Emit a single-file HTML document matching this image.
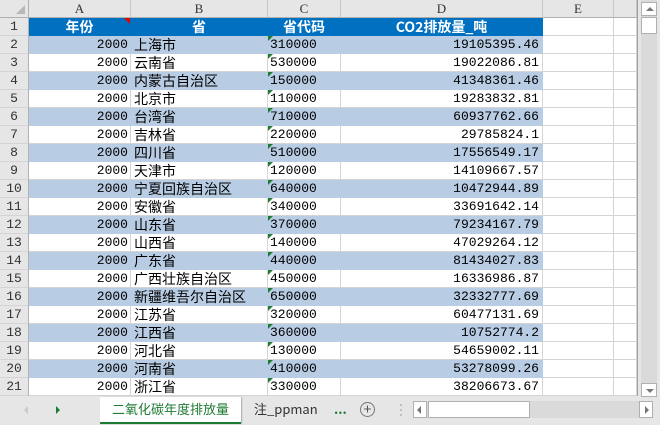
<!DOCTYPE html>
<html><head><meta charset="utf-8"><style>
*{margin:0;padding:0;box-sizing:border-box}
body{width:660px;height:425px;overflow:hidden;background:#e6e6e6;font-family:"Liberation Mono","Noto Sans CJK SC",monospace;font-size:13px;position:relative}
.grid{position:absolute;left:0;top:0;width:638px;height:396px;background:#fff;border-right:1px solid #a0a0a0}
.r{position:absolute;left:0;height:18px;width:637px;display:flex}
.r div{height:18px;line-height:18px;border-right:1px solid #d4d4d4;border-bottom:1px solid #d4d4d4;white-space:nowrap;overflow:hidden;position:relative}
.h div{background:#e6e6e6;text-align:center;border-right:1px solid #c6c6c6;border-bottom:1px solid #b0b0b0;color:#333;font-family:"Liberation Serif","Noto Serif CJK SC",serif;font-size:13px;padding:0!important}
.c0{width:29px;text-align:center;background:#e6e6e6!important;border-right:1px solid #b0b0b0!important;color:#333}
.c1{width:102px;text-align:right;padding-right:2px}
.c2{width:137px;padding-left:3px;font-family:"Noto Sans CJK SC",sans-serif;font-size:14px}
.c3{width:73px;padding-left:2px}
.c4{width:202px;text-align:right;padding-right:3px}
.c5{width:71px}
.c6{width:23px}
.b .c1,.b .c2,.b .c3,.b .c4{background:#b8cce4;border-color:#b8cce4}
.t .c1,.t .c2,.t .c3,.t .c4{background:#0070c0;color:#fff;font-weight:bold;text-align:center;font-family:"Noto Sans CJK SC",sans-serif;font-size:14px;border-color:#0070c0;padding:0}
.g::before{content:"";position:absolute;left:0;top:0;border-top:5px solid #1e7b34;border-right:5px solid transparent}
.red::after{content:"";position:absolute;right:0;top:0;border-top:6px solid #e00;border-left:6px solid transparent}
.vs{position:absolute;left:641px;top:0;width:16px;height:396px;background:#dadada}
.btn{position:absolute;background:#fff;border:1px solid #b0b0b0}
.tabs{position:absolute;left:0;top:397px;width:660px;height:28px;background:#e6e6e6;font-family:"Noto Sans CJK SC",sans-serif;font-size:13px}
</style></head><body>
<div class="grid">
<div class="r h" style="top:0"><div class="c0"><span style="position:absolute;right:3px;bottom:3px;border-bottom:9px solid #b8b8b8;border-left:9px solid transparent"></span></div><div class="c1">A</div><div class="c2">B</div><div class="c3">C</div><div class="c4">D</div><div class="c5">E</div><div class="c6"></div></div>
<div class="r t" style="top:18px"><div class="c0">1</div><div class="c1 red">年份</div><div class="c2">省</div><div class="c3">省代码</div><div class="c4">CO2排放量_吨</div><div class="c5"></div><div class="c6"></div></div>
<div class="r b" style="top:36px"><div class="c0">2</div><div class="c1">2000</div><div class="c2">上海市</div><div class="c3 g">310000</div><div class="c4">19105395.46</div><div class="c5"></div><div class="c6"></div></div>
<div class="r" style="top:54px"><div class="c0">3</div><div class="c1">2000</div><div class="c2">云南省</div><div class="c3 g">530000</div><div class="c4">19022086.81</div><div class="c5"></div><div class="c6"></div></div>
<div class="r b" style="top:72px"><div class="c0">4</div><div class="c1">2000</div><div class="c2">内蒙古自治区</div><div class="c3 g">150000</div><div class="c4">41348361.46</div><div class="c5"></div><div class="c6"></div></div>
<div class="r" style="top:90px"><div class="c0">5</div><div class="c1">2000</div><div class="c2">北京市</div><div class="c3 g">110000</div><div class="c4">19283832.81</div><div class="c5"></div><div class="c6"></div></div>
<div class="r b" style="top:108px"><div class="c0">6</div><div class="c1">2000</div><div class="c2">台湾省</div><div class="c3 g">710000</div><div class="c4">60937762.66</div><div class="c5"></div><div class="c6"></div></div>
<div class="r" style="top:126px"><div class="c0">7</div><div class="c1">2000</div><div class="c2">吉林省</div><div class="c3 g">220000</div><div class="c4">29785824.1</div><div class="c5"></div><div class="c6"></div></div>
<div class="r b" style="top:144px"><div class="c0">8</div><div class="c1">2000</div><div class="c2">四川省</div><div class="c3 g">510000</div><div class="c4">17556549.17</div><div class="c5"></div><div class="c6"></div></div>
<div class="r" style="top:162px"><div class="c0">9</div><div class="c1">2000</div><div class="c2">天津市</div><div class="c3 g">120000</div><div class="c4">14109667.57</div><div class="c5"></div><div class="c6"></div></div>
<div class="r b" style="top:180px"><div class="c0">10</div><div class="c1">2000</div><div class="c2">宁夏回族自治区</div><div class="c3 g">640000</div><div class="c4">10472944.89</div><div class="c5"></div><div class="c6"></div></div>
<div class="r" style="top:198px"><div class="c0">11</div><div class="c1">2000</div><div class="c2">安徽省</div><div class="c3 g">340000</div><div class="c4">33691642.14</div><div class="c5"></div><div class="c6"></div></div>
<div class="r b" style="top:216px"><div class="c0">12</div><div class="c1">2000</div><div class="c2">山东省</div><div class="c3 g">370000</div><div class="c4">79234167.79</div><div class="c5"></div><div class="c6"></div></div>
<div class="r" style="top:234px"><div class="c0">13</div><div class="c1">2000</div><div class="c2">山西省</div><div class="c3 g">140000</div><div class="c4">47029264.12</div><div class="c5"></div><div class="c6"></div></div>
<div class="r b" style="top:252px"><div class="c0">14</div><div class="c1">2000</div><div class="c2">广东省</div><div class="c3 g">440000</div><div class="c4">81434027.83</div><div class="c5"></div><div class="c6"></div></div>
<div class="r" style="top:270px"><div class="c0">15</div><div class="c1">2000</div><div class="c2">广西壮族自治区</div><div class="c3 g">450000</div><div class="c4">16336986.87</div><div class="c5"></div><div class="c6"></div></div>
<div class="r b" style="top:288px"><div class="c0">16</div><div class="c1">2000</div><div class="c2">新疆维吾尔自治区</div><div class="c3 g">650000</div><div class="c4">32332777.69</div><div class="c5"></div><div class="c6"></div></div>
<div class="r" style="top:306px"><div class="c0">17</div><div class="c1">2000</div><div class="c2">江苏省</div><div class="c3 g">320000</div><div class="c4">60477131.69</div><div class="c5"></div><div class="c6"></div></div>
<div class="r b" style="top:324px"><div class="c0">18</div><div class="c1">2000</div><div class="c2">江西省</div><div class="c3 g">360000</div><div class="c4">10752774.2</div><div class="c5"></div><div class="c6"></div></div>
<div class="r" style="top:342px"><div class="c0">19</div><div class="c1">2000</div><div class="c2">河北省</div><div class="c3 g">130000</div><div class="c4">54659002.11</div><div class="c5"></div><div class="c6"></div></div>
<div class="r b" style="top:360px"><div class="c0">20</div><div class="c1">2000</div><div class="c2">河南省</div><div class="c3 g">410000</div><div class="c4">53278099.26</div><div class="c5"></div><div class="c6"></div></div>
<div class="r" style="top:378px"><div class="c0">21</div><div class="c1">2000</div><div class="c2">浙江省</div><div class="c3 g">330000</div><div class="c4">38206673.67</div><div class="c5"></div><div class="c6"></div></div>
</div>
<div class="vs"><div class="btn" style="left:0;top:2px;width:16px;height:14px"><span style="position:absolute;left:4px;top:4px;border-bottom:4px solid #777;border-left:4px solid transparent;border-right:4px solid transparent"></span></div><div class="btn" style="left:0;top:17px;width:16px;height:17px"></div><div class="btn" style="left:0;top:383px;width:16px;height:14px"><span style="position:absolute;left:4px;top:5px;border-top:4px solid #777;border-left:4px solid transparent;border-right:4px solid transparent"></span></div></div>
<div class="tabs">
<span style="position:absolute;left:24px;top:9px;border-right:4px solid #c8c8c8;border-top:4px solid transparent;border-bottom:4px solid transparent"></span>
<span style="position:absolute;left:56px;top:9px;border-left:4px solid #1e7b34;border-top:4px solid transparent;border-bottom:4px solid transparent"></span>
<div style="position:absolute;left:100px;top:0;width:141px;height:27px;background:#fff;border-bottom:2px solid #1e7b34;color:#1e7b34;text-align:center;line-height:24px;box-shadow:1px 0 1px #aaa">二氧化碳年度排放量</div>
<div style="position:absolute;left:254px;top:0;line-height:24px;color:#333">注_ppman</div>
<div style="position:absolute;left:334px;top:0;line-height:24px;color:#1e7b34;font-weight:bold">...</div>
<div style="position:absolute;left:360px;top:5px;width:15px;height:15px;border:1px solid #777;border-radius:50%;text-align:center;line-height:12px;color:#555;font-size:14px">+</div>
<div style="position:absolute;left:396px;top:5px;color:#bbb;font-size:10px;line-height:5px">·<br>·<br>·</div>
<div style="position:absolute;left:413px;top:4px;width:240px;height:17px;background:#dadada"><div class="btn" style="left:0;top:0;width:14px;height:17px"><span style="position:absolute;left:3px;top:4px;border-right:4px solid #777;border-top:4px solid transparent;border-bottom:4px solid transparent"></span></div><div class="btn" style="left:15px;top:0;width:102px;height:17px"></div><div class="btn" style="left:226px;top:0;width:14px;height:17px"><span style="position:absolute;left:5px;top:4px;border-left:4px solid #777;border-top:4px solid transparent;border-bottom:4px solid transparent"></span></div></div>
</div>
</body></html>
